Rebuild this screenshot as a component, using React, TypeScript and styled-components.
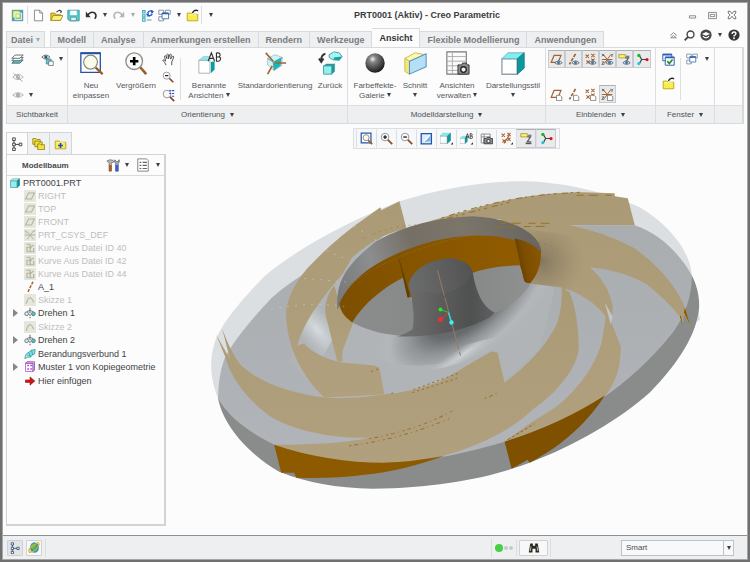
import React from "react";
import styled, { createGlobalStyle, css } from "styled-components";

const GlobalStyle = createGlobalStyle`
  * { box-sizing: border-box; }
  html, body { margin: 0; padding: 0; }
  body { font-family: "Liberation Sans", Arial, sans-serif; font-size: 8px; color: #4a4d50; }
  button { font: inherit; color: inherit; padding: 0; margin: 0; border: 0; background: none; }
  ul { list-style: none; margin: 0; padding: 0; }
`;

/* ---------- icons ---------- */

const BROWN = "#a8622e";

const Plane = ({ c = BROWN }: { c?: string }) => (
  <path d="M5 3h8.500l-3.500 8.500H1.500z" fill="none" stroke={c} strokeWidth="1.500" />
);
const Axis = () => (
  <path d="M10.500 1L3 14" stroke={BROWN} strokeWidth="2" strokeDasharray="4.500 1.500" fill="none" />
);
const Crosses = () => (
  <path
    d="M2 2l4 4M6 2L2 6M9 1l4 4M13 1L9 5M3 9l4 4M7 9l-4 4M9 7l4 4M13 7l-4 4"
    stroke={BROWN}
    strokeWidth="1.300"
    fill="none"
  />
);
const Csys = () => (
  <g fill="none">
    <path d="M1 8h13M3 2l9 12M12 2L4 13" stroke={BROWN} strokeWidth="1.200" />
    <path d="M1 1l3 3M4 1L1 4M12 1l1.500 2L15 1M13.500 3v2M1 11h3l-3 3h3" stroke="#55585c" strokeWidth="1" />
  </g>
);
const Eye = () => (
  <g>
    <path d="M6 12q4.500-4.500 9 0q-4.500 4-9 0z" fill="#dfe8ee" stroke="#4d5a66" strokeWidth="1" />
    <circle cx="10.500" cy="12" r="1.800" fill="#3d77a5" />
  </g>
);
const Page = () => (
  <path d="M8 9h4.500l2 2V15.500H8z" fill="#fff" stroke="#777" strokeWidth="1" />
);
const Cube = ({ x = 1, y = 2, s = 1 }: { x?: number; y?: number; s?: number }) => (
  <g transform={`translate(${x} ${y}) scale(${s})`} strokeLinejoin="round">
    <path d="M0 4h9v9H0z" fill="#fff" stroke="#93a3a8" strokeWidth=".8" />
    <path d="M0 4l3.500-3.500H13L9 4z" fill="#7ff0f0" stroke="#7ab" strokeWidth=".5" />
    <path d="M9 4l4-3.500v9L9 13z" fill="#0a9a9a" stroke="#178" strokeWidth=".5" />
  </g>
);
const Folder = () => (
  <g>
    <path d="M1.500 5h5l1 1.500h7v8h-13z" fill="#f7ee4a" stroke="#b99a16" strokeWidth="1" />
    <path d="M3 7h10" stroke="#fffbb0" />
  </g>
);
const Lens = ({ sign }: { sign?: "+" | "-" }) => (
  <g>
    <path d="M9.500 9.500L15 15" stroke="#8a4a22" strokeWidth="2.200" />
    <circle cx="6.200" cy="6.200" r="4.700" fill="#fafafa" stroke="#8a8d90" strokeWidth="1.100" />
    {sign && <path d="M4 6.200h4.500" stroke="#111" strokeWidth="1.500" />}
    {sign === "+" && <path d="M6.200 4v4.500" stroke="#111" strokeWidth="1.500" />}
  </g>
);
const Windows = () => (
  <g fill="#fff" stroke="#6f7f92" strokeWidth="1">
    <path d="M1 1.500h6v5H1zM9 1.500h6v5H9zM1 9.500h6v5H1z" />
    <path d="M5 5h8v7H5z" stroke="#2a62b0" />
    <path d="M5 5.500h8" stroke="#2a62b0" strokeWidth="2" />
  </g>
);
const Camera = () => (
  <g>
    <path d="M5 8h3l1-1.500h3L13 8h2.500v6.500H5z" fill="#8b8f92" stroke="#333" strokeWidth="1" />
    <circle cx="10.500" cy="11.200" r="2.100" fill="#eee" stroke="#222" strokeWidth="1" />
  </g>
);
const Tag = () => (
  <g>
    <path d="M1 2h8v4H1z" fill="#fbf46a" stroke="#a3982a" strokeWidth="1" />
    <path d="M9 6h4l-4 6h5M10 4h4" stroke="#555" strokeWidth="1.400" fill="none" />
  </g>
);
const Triad = () => (
  <g>
    <path d="M4 3l3 5h6M7 8l-3 5" stroke="#444" strokeWidth="1.500" fill="none" />
    <circle cx="3.500" cy="3" r="2" fill="#18b818" />
    <circle cx="13.500" cy="8" r="2" fill="#e01010" />
    <circle cx="3.500" cy="13" r="2" fill="#20c8d8" />
  </g>
);
const Nodes = ({ c = "#333" }: { c?: string }) => (
  <g fill="#fff" stroke={c} strokeWidth="1">
    <path d="M4.500 4v9M4.500 8.500H11" fill="none" />
    <path d="M3 1h3v3H3zM3 7h3v3H3zM3 12.500h3v3H3zM10.500 7h3v3h-3z" />
  </g>
);
const Muted = ({ children }: { children: React.ReactNode }) => (
  <g>
    <path d="M0 0h16v16H0z" fill="#e6e6dc" />
    {children}
  </g>
);

const icons: Record<string, React.ReactNode> = {
  app: (
    <g>
      <path d="M1 1h14v14H1z" fill="#4f9fc9" />
      <path d="M2 2h9v9H2z" fill="#d9ec93" stroke="#6da544" />
      <path d="M5 5h8v8H5z" fill="#8ecb70" stroke="#fff" />
      <path d="M6.500 6.500h4v4h-4z" fill="#f4f9b8" />
    </g>
  ),
  page: <path d="M3 1.500h6.500L13 5v9.500H3zM9.500 1.500V5H13" fill="#fff" stroke="#777" />,
  open: (
    <g stroke="#a98312">
      <path d="M1 14V5h5l1 2h6v7z" fill="#e8c93c" />
      <path d="M1 14l3-6h12l-3 6z" fill="#fbf07a" />
      <path d="M8 4q3-4 6-1l-1 2" fill="none" stroke="#333" strokeWidth="1.300" />
    </g>
  ),
  save: (
    <g>
      <path d="M1 1.500h14v13H3l-2-2z" fill="#4fd0cf" stroke="#3a8f95" />
      <path d="M4 2h8v5.500H4z" fill="#fff" />
      <path d="M4.500 10h7v4.500h-7z" fill="#e8f2f3" stroke="#3a8f95" />
    </g>
  ),
  undo: (
    <g>
      <path d="M3 8q4-6 9-3q3 3 0 7" fill="none" stroke="#333" strokeWidth="2" />
      <path d="M1 3v7h6z" fill="#333" />
    </g>
  ),
  redo: (
    <g>
      <path d="M13 8q-4-6-9-3q-3 3 0 7" fill="none" stroke="#b4b6b8" strokeWidth="2" />
      <path d="M15 3v7H9z" fill="#b4b6b8" />
    </g>
  ),
  regen: (
    <g fill="none">
      <path d="M2 2h3v3H2zM2 7h3v3H2zM2 12h3v3H2zM7 8.500h4M7 13.500h6" stroke="#39a9b9" strokeWidth="1.300" />
      <path d="M8 5q2-4 6-2M14 6q-3 4-6 1" stroke="#2457c5" strokeWidth="1.600" />
      <path d="M12 1l4 2-3 3zM9 9L6 6l4-1z" fill="#2457c5" />
    </g>
  ),
  windows: <Windows />,
  closeFolder: (
    <g>
      <Folder />
      <path d="M8 5q1-3 5-3.500l2 1" stroke="#222" strokeWidth="1.500" fill="none" />
    </g>
  ),
  layers: (
    <g fill="#fff" stroke="#4b5556">
      <path d="M1 12.500l4-4h10l-4 4z" fill="#4fd0cf" />
      <path d="M1 9.500l4-4h10l-4 4z" />
      <path d="M1 6.500l4-4h10l-4 4z" />
    </g>
  ),
  eyePages: (
    <g>
      <path d="M1 5q5-5 10 0q-5 5-10 0z" fill="#f3f6f7" stroke="#555" />
      <circle cx="6" cy="5" r="2" fill="#356" />
      <path d="M6.500 7.500h6v6h-6z" fill="#59c9d3" stroke="#4a8890" />
      <path d="M9.500 10h5.500v5.500H9.500z" fill="#fff" stroke="#667" />
    </g>
  ),
  eyeOff: (
    <g stroke="#a0a2a4" fill="none">
      <path d="M1 8q7-7 14 0q-7 7-14 0z" />
      <circle cx="8" cy="8" r="2.300" fill="#c5c7c9" />
      <path d="M2 3l12 11" strokeWidth="1.300" />
    </g>
  ),
  eyeOn: (
    <g stroke="#a0a2a4" fill="none">
      <path d="M1 8q7-6 14 0q-7 6-14 0z" />
      <circle cx="8" cy="8" r="2.500" fill="#aeb1b3" />
    </g>
  ),
  hand: (
    <path
      d="M5 15q-1-3-4-6q1-2 3.500 1L3 4q1-1.500 2 0l1 3V2q1-1.500 2 0v5l1.500-5q1-1 2 0L10.500 7.500 13 4q1.500-.5 1.500 1L12 11v4"
      fill="#fff"
      stroke="#444"
      strokeWidth="1.100"
    />
  ),
  zoomOut: <Lens sign="-" />,
  zoomIn: <Lens sign="+" />,
  zoomSel: (
    <g>
      <Lens />
      <path d="M9 2h2M12 2h3M9 5.500h2M12 5.500h3M12 9h3" stroke="#2d50d0" strokeWidth="1.300" />
    </g>
  ),
  refit: (
    <g>
      <path d="M1.500 1.500h12v12h-12z" fill="#fff" stroke="#2456a8" strokeWidth="1.500" />
      <path d="M10 10l5 5" stroke="#9a5a2a" strokeWidth="2" />
      <circle cx="7.500" cy="7" r="3.700" fill="#fbfbe8" stroke="#777" />
    </g>
  ),
  bigRefit: (
    <g>
      <path d="M2 2h21v21H2z" fill="#fff" stroke="#2550a4" strokeWidth="1.400" />
      <path d="M2 2.500h21" stroke="#2550a4" strokeWidth="2" />
      <path d="M18 18l7.500 7" stroke="#9a5d22" strokeWidth="2.500" />
      <circle cx="12.500" cy="12" r="7.500" fill="#fbfbec" stroke="#8a8a85" strokeWidth="1.300" />
    </g>
  ),
  bigZoom: (
    <g>
      <path d="M17 17l7 8" stroke="#9a5d22" strokeWidth="2.800" />
      <circle cx="11" cy="11" r="9" fill="#fafaf6" stroke="#8a8d8f" strokeWidth="1.400" />
      <path d="M11 6.500v9M6.500 11h9" stroke="#000" strokeWidth="2.800" />
    </g>
  ),
  bigNamed: (
    <g>
      <path d="M2 10h12v14H2z" fill="#fff" stroke="#a7b0b3" />
      <path d="M2 10l5-4h7v4z" fill="#8eeaea" stroke="#7ab" strokeWidth=".5" />
      <path d="M15 12l4-1v9l-4 4z" fill="#0a9d9d" />
      <path d="M12 11l3.500-9L19 11M13.300 8h4.500M21 2v9h2.500q2-.5 2-2.500T23 6.500h-2M21 2h2q2 .2 2 2.200T23 6.500" fill="none" stroke="#333" strokeWidth="1.200" />
    </g>
  ),
  bigOrient: (
    <g>
      <path d="M5 8l8-4 8 3-1 9-8 5-7-6z" fill="#c6f7f6" stroke="#538" strokeOpacity=".3" />
      <path d="M11 12l9-5-1 9-7 5z" fill="#19b6b6" />
      <path d="M5 8l6 4 10-5M11 12l1 9" stroke="#68979b" fill="none" />
      <path d="M3 2l8 9M13 13h12M10 16L5 25" stroke="#a06632" strokeWidth="1.800" />
    </g>
  ),
  bigBack: (
    <g>
      <path d="M8 3Q3 4 3.500 11M1 8l2.500 4L6 8" fill="none" stroke="#333" strokeWidth="2" />
      <path d="M12 4l5-3 6 1 3 4-3 4-7-.5L12 7z" fill="#a7f5f3" stroke="#4a9a9d" />
      <path d="M17 7l9-1-3 4-6-.5z" fill="#13a2a2" />
      <path d="M6 16h9v9H6z" fill="#8ff2f0" stroke="#4a9a9d" />
      <path d="M6 16l3-2h9l-3 2zM15 16l3-2v8l-3 3z" fill="#1b9797" stroke="#4a9a9d" strokeWidth=".5" />
    </g>
  ),
  bigSphere: (
    <g>
      <defs>
        <radialGradient id="sphere" cx=".38" cy=".3" r=".7">
          <stop offset="0" stopColor="#f2f2f2" />
          <stop offset=".25" stopColor="#858585" />
          <stop offset=".65" stopColor="#4d4d4d" />
          <stop offset="1" stopColor="#1c1c1c" />
        </radialGradient>
      </defs>
      <circle cx="13" cy="13" r="10.500" fill="url(#sphere)" />
    </g>
  ),
  bigSection: (
    <g strokeLinejoin="round">
      <path d="M2 8L13 2l11 2-16 8z" fill="#fdf9ae" stroke="#c9b94c" />
      <path d="M2 8l5 3v14l-5-3z" fill="#f3e778" stroke="#c9b94c" />
      <path d="M7 11l18-8v14L7 25z" fill="#b4e0f5" stroke="#5c8fc0" strokeWidth="1.100" />
    </g>
  ),
  bigManage: (
    <g>
      <path d="M2 1h21v24H2z" fill="#fafafa" stroke="#777" strokeWidth="1.200" />
      <path d="M2 6h21M2 11h21M2 16h21M2 21h21M8 1v24" stroke="#a9abad" />
      <path d="M14 15h4l1-2h4l1 2h2v10H14z" fill="#8a8d8f" stroke="#333" />
      <circle cx="20" cy="20" r="3" fill="#efefef" stroke="#222" strokeWidth="1.400" />
    </g>
  ),
  bigStyle: <Cube x={1} y={1} s={1.85} />,
  planeEye: <g><Plane /><Eye /></g>,
  axisEye: <g><Axis /><Eye /></g>,
  pointEye: <g><Crosses /><Eye /></g>,
  csysEye: <g><Csys /><Eye /></g>,
  tagEye: <g><Tag /><Eye /></g>,
  tag: <g><Tag /><path d="M7 14h7" stroke="#555" strokeWidth="2" /></g>,
  triad: <Triad />,
  planeTag: <g><Plane /><Page /></g>,
  axisTag: <g><Axis /><Page /></g>,
  pointTag: <g><Crosses /><Page /></g>,
  csysTag: <g><Csys /><Page /></g>,
  activate: (
    <g fill="#fff" stroke="#2a62b0" strokeWidth="1.200">
      <path d="M1 1.500h11v8H1z" />
      <path d="M4 5h11v10H4z" />
      <path d="M1 2h11M4 5.500h11" strokeWidth="2" />
      <path d="M6.500 10l2.500 3 4-5" stroke="#188a30" strokeWidth="2" fill="none" />
    </g>
  ),
  repaint: (
    <g>
      <path d="M1.500 2h12.500v12.500h-12.500z" fill="#dcecfa" stroke="#2456a8" strokeWidth="1.600" />
      <path d="M4 13L13 3v8z" fill="#7ab0e4" />
      <path d="M5 12l7-8" stroke="#fff" strokeWidth="1.500" />
    </g>
  ),
  cube: <g><Cube x={0} y={1} /><path d="M13 15.500h3v-3z" fill="#333" /></g>,
  named: (
    <g>
      <Cube x={0} y={5} s={0.7} />
      <path d="M7 8l2.200-6 2 6M7.800 6H11M12.500 2v6h1.500q1.500-.3 1.500-1.600T14 5h-1.500M12.500 2H14q1 .2 1 1.500T14 5" fill="none" stroke="#333" />
      <path d="M13 15.500h3v-3z" fill="#333" />
    </g>
  ),
  manage: <g><path d="M1.500 2.500h11v11h-11zM1.500 6h11M5 2.500v11" fill="#fff" stroke="#777" /><Camera /></g>,
  datum: <g><Crosses /><path d="M5 14L12 3" stroke={BROWN} strokeWidth="1.300" /><path d="M13 15.500h3v-3z" fill="#333" /></g>,
  nodes: <Nodes />,
  nodesBlue: <Nodes c="#24396b" />,
  folders: (
    <g fill="#f2e23c" stroke="#8d7a1a">
      <path d="M1 2h4l1 1h4v6H1z" /><path d="M3.500 5h4l1 1h4v6h-9z" /><path d="M7 8.500h3l1 1h4.500v6H7z" />
    </g>
  ),
  favorites: (
    <g>
      <Folder />
      <path d="M8 7.500v6M5 10.500h6" stroke="#2547c9" strokeWidth="2" />
    </g>
  ),
  tools: (
    <g>
      <path d="M1 3.500q3-2.500 7-1l1 2-3 1v9.500H3.500V5.500z" fill="#b8b8b8" stroke="#666" strokeWidth=".8" />
      <path d="M3.500 8h3v7h-3z" fill="#b0561e" />
      <path d="M10 2q-1 3 1 4v9h3V6q2-1 1-4l-1 2h-2z" fill="#aab" stroke="#556" strokeWidth=".8" />
      <path d="M11 8h3v7h-3z" fill="#2f62c6" />
    </g>
  ),
  list: (
    <g>
      <path d="M2 1h10l2 2v12H2z" fill="#fff" stroke="#777" />
      <path d="M4 5h2M4 8.500h2M4 12h2M7.500 5h5M7.500 8.500h5M7.500 12h5" stroke="#666" strokeWidth="1.300" />
    </g>
  ),
  part: (
    <g>
      <path d="M2 5h9v9H2z" fill="#8feeee" stroke="#4fa3a6" />
      <path d="M2 5l2.500-2.500H14L11 5z" fill="#bff" stroke="#4fa3a6" />
      <path d="M11 5l3-2.500V11l-3 3z" fill="#138a8d" stroke="#2d8f93" />
    </g>
  ),
  mPlane: <Muted><path d="M6 4h8l-4 8H2z" fill="none" stroke="#b3b3a0" strokeWidth="1.400" /></Muted>,
  mCsys: <Muted><path d="M1 8h14M3 2l10 12M13 2L4 14M1 2l3 4M12 4l3-2" fill="none" stroke="#b3b3a0" strokeWidth="1.300" /></Muted>,
  mCurve: <Muted><path d="M3 3h5v4H4v6h5q-2-4 0-6t4-3M9 13h4V8" fill="none" stroke="#b3b3a0" strokeWidth="1.600" /></Muted>,
  mSketch: <Muted><path d="M3 13Q7-2 13 11" fill="none" stroke="#b3b3a0" strokeWidth="1.500" /></Muted>,
  axis: <path d="M12 1L5 15" stroke={BROWN} strokeWidth="2" strokeDasharray="4 1.500" fill="none" />,
  revolve: (
    <g fill="none" stroke="#4d6a6c" strokeWidth="1.100">
      <path d="M8 1v14" strokeDasharray="3 1" stroke="#444" />
      <circle cx="3.500" cy="9" r="2.500" fill="#d6f1f1" />
      <circle cx="12.500" cy="9" r="2.500" fill="#58c6c8" />
      <path d="M4 6q4-3 8 0" />
    </g>
  ),
  surface: (
    <g stroke="#1e8d96" strokeWidth=".9">
      <path d="M1 14q1-7 5-8l3 6q-5 0-8 2z" fill="#a8f4f4" />
      <path d="M6 6q3-4 9-4l-1 6q-4 1-5 4z" fill="#7fe0e4" />
      <path d="M3 9l5 1.500M10 3l1.500 6" fill="none" />
    </g>
  ),
  pattern: (
    <g>
      <path d="M2 3h10v11H2z" fill="#fff" stroke="#a64fd0" />
      <path d="M2 3l2-2h10v11l-2 2V3z" fill="#e3c0f2" stroke="#7a4a9a" />
      <path d="M4.500 6h2M8.500 6h2M4.500 10.500h2M8.500 10.500h2" stroke="#b32cd6" strokeWidth="2" />
    </g>
  ),
  insert: <path d="M2 6.500h6V2.500L14.500 8 8 13.500V10H2z" fill="#d61313" stroke="#7c0d0d" strokeWidth=".7" />,
  browser: (
    <g>
      <ellipse cx="8" cy="8" rx="5.500" ry="6.500" fill="#2f9ab8" />
      <path d="M4 5l4-2 2 3-3 4-3-1z" fill="#63c04a" />
      <path d="M13.500 1.500Q-2 9 2 14q9-1 12-11" fill="none" stroke="#ddb11a" strokeWidth="1.600" />
    </g>
  ),
  binoculars: (
    <g fill="#2a2a22">
      <path d="M3 2h3.500v3H9.500V2H13l2 12h-5V9H6v5H1z" />
      <path d="M4 6L3 12M12 6l1 6" stroke="#c9c9b4" strokeWidth="1.200" />
    </g>
  ),
  min: <path d="M2.500 8.500h11v4h-11z" fill="#fff" stroke="#666" strokeWidth="1.300" />,
  max: <path d="M1 2.500h14v11H1zM4 6h8v4H4z" fill="#fff" stroke="#666" strokeWidth="1.300" />,
  close: (
    <path d="M2 2h3l3 4 3-4h3v3l-3 3 3 3v3h-3l-3-4-3 4H2v-3l3-3-3-3z" fill="#fff" stroke="#555" strokeWidth="1.300" />
  ),
  collapse: <path d="M2 8l6-5 6 5M3 12l5-4 5 4z" fill="none" stroke="#666" strokeWidth="1.300" />,
  search: (
    <g fill="none" stroke="#444">
      <circle cx="9.500" cy="6.500" r="5" strokeWidth="2" />
      <path d="M6 10l-5 5" strokeWidth="2.600" />
    </g>
  ),
  learn: (
    <g>
      <circle cx="8" cy="8" r="7.500" fill="#45484b" />
      <path d="M2.500 6.500L8 4l5.500 2.500L8 9z" fill="#fff" />
      <path d="M4 9.500q4 4.500 8 0" stroke="#fff" strokeWidth="1.500" fill="none" />
    </g>
  ),
  help: (
    <g>
      <circle cx="8" cy="8" r="7.500" fill="#333638" />
      <path d="M5.500 6.500Q5.500 4 8 4t2.500 2.200Q10.500 7.500 8 9v1" stroke="#fff" strokeWidth="1.900" fill="none" />
      <circle cx="8" cy="12.300" r="1.200" fill="#fff" />
    </g>
  ),
};

const IconSvg = styled.svg`
  display: block;
  flex: none;
`;
const Icon = ({ name, size = 13 }: { name: string; size?: number }) => {
  const box = name.startsWith("big") ? 27 : 16;
  return (
    <IconSvg width={size} height={size} viewBox={`0 0 ${box} ${box}`} aria-hidden="true">
      {icons[name]}
    </IconSvg>
  );
};

const Caret = styled.span<{ $dim?: boolean }>`
  display: inline-block;
  flex: none;
  border: 2px solid transparent;
  border-top: 4px solid ${(p) => (p.$dim ? "#a5a7a9" : "#3c3f42")};
  border-bottom: 0;
  vertical-align: 1px;
`;

/* ---------- frame ---------- */

const Frame = styled.div`
  min-height: 100vh;
  display: flex;
  flex-direction: column;
  background: #fcfcfc;
  border: 2px solid #707070;
  box-shadow: inset 0 0 0 1px #a6a6a6;
  padding: 1px;
`;
const TitleBar = styled.header`
  display: grid;
  grid-template-columns: auto 1fr auto;
  align-items: center;
  height: 24px;
  padding: 0 4px;
`;
const Row = styled.div<{ $gap?: number }>`
  display: flex;
  align-items: center;
  gap: ${(p) => p.$gap ?? 0}px;
`;
const Title = styled.h1`
  margin: 0;
  padding-right: 48px;
  font-size: 9px;
  font-weight: bold;
  color: #3b3d40;
  text-align: center;
  white-space: nowrap;
`;
const WindowButtons = styled(Row)`
  justify-content: flex-end;
  padding-right: 1px;
`;
const IconButton = styled.button<{ $w?: number }>`
  width: ${(p) => p.$w ?? 17}px;
  height: 18px;
  flex: none;
  display: flex;
  align-items: center;
  justify-content: center;
`;
const Divider = styled.span<{ $h?: number }>`
  flex: none;
  width: 1px;
  height: ${(p) => p.$h ?? 18}px;
  background: #dcdee0;
`;

/* ---------- ribbon ---------- */

const TabRow = styled.nav`
  display: flex;
  align-items: flex-end;
  padding: 0 3px;
  height: 20px;
`;
const TabStrip = styled.div`
  display: flex;
  align-items: flex-end;
  margin-left: 5px;
`;
const Tab = styled.button<{ $active?: boolean }>`
  height: ${(p) => (p.$active ? 19 : 16)}px;
  padding: 0 7px;
  font-size: 9px;
  font-weight: bold;
  white-space: nowrap;
  color: ${(p) => (p.$active ? "#333538" : "#797c80")};
  background: ${(p) => (p.$active ? "#fcfcfc" : "#eeeff1")};
  border: 1px solid #d8dbde;
  border-bottom: 0;
  & + & { border-left-width: 0; }
`;
const FileTab = styled(Tab)`
  padding: 0 4px;
`;
const TabTools = styled(Row)`
  margin-left: auto;
  height: 24px;
  padding-right: 1px;
`;
const Ribbon = styled.section`
  display: grid;
  grid-template-columns: 60px 280px 198px 110px 59px 1fr;
  margin: 0 3px;
  border: 1px solid #d8dbde;
  border-right-width: 2px;
`;
const Group = styled.div`
  display: grid;
  grid-template-rows: 57px 18px;
  min-width: 0;
  & + & { border-left: 1px solid #dcdee0; }
`;
const GroupBody = styled.div<{ $left?: number }>`
  display: flex;
  align-items: flex-start;
  padding: 2px 0 0 ${(p) => p.$left ?? 0}px;
`;
const GroupLabel = styled.div`
  display: flex;
  align-items: center;
  justify-content: center;
  gap: 5px;
  background: #eeeff1;
  border-top: 1px solid #dcdee0;
  color: #4f5356;
`;
const BigButton = styled.button<{ $w: number }>`
  width: ${(p) => p.$w}px;
  flex: none;
  display: flex;
  flex-direction: column;
  align-items: center;
  gap: 5px;
  padding-top: 1px;
  line-height: 10px;
  color: #55585c;
  white-space: nowrap;
`;
const SmallStack = styled.div<{ $w?: number; $row?: number }>`
  display: grid;
  grid-auto-rows: ${(p) => p.$row ?? 18}px;
  width: ${(p) => p.$w ?? 17}px;
  flex: none;
`;
const GroupDivider = styled(Divider)`
  margin-top: 8px;
`;
const ToggleGrid = styled.div`
  display: flex;
  flex-direction: column;
  gap: 17px;
`;
const Toggle = styled.button<{ $on?: boolean; $w?: number }>`
  width: ${(p) => p.$w ?? 17}px;
  height: 18px;
  flex: none;
  display: flex;
  align-items: center;
  justify-content: center;
  border: 1px solid transparent;
  ${(p) =>
    p.$on &&
    css`
      background: #e9eaec;
      border-color: #aeb1b4 #c8cacd #c8cacd;
    `}
`;

const Big = ({ icon, lines, w, menu }: { icon: string; lines: string[]; w: number; menu?: boolean }) => (
  <BigButton $w={w} type="button">
    <Icon name={icon} size={25} />
    <span>
      {lines.map((line, i) => (
        <React.Fragment key={line}>
          {i > 0 && <br />}
          {line}
        </React.Fragment>
      ))}
      {menu && (lines.length > 1 ? " " : <br />)}
      {menu && <Caret />}
    </span>
  </BigButton>
);

/* ---------- workspace ---------- */

const Workspace = styled.main`
  flex: 1;
  display: flex;
  min-height: 320px;
`;
const Sidebar = styled.aside`
  width: 160px;
  flex: none;
  display: flex;
  flex-direction: column;
  margin: 8px 0 9px 3px;
`;
const SideTabs = styled.div`
  display: flex;
`;
const SideTab = styled.button<{ $active?: boolean }>`
  width: 22px;
  height: 22px;
  display: flex;
  align-items: center;
  justify-content: center;
  border: 1px solid #d3d6d9;
  border-left-width: ${(p) => (p.$active ? 1 : 0)}px;
  border-bottom: 0;
  background: ${(p) => (p.$active ? "#fcfcfc" : "#f0f1f3")};
`;
const Panel = styled.div`
  flex: 1;
  border: 1px solid #d0d4d8;
  border-width: 1px 2px 2px 1px;
`;
const PanelHead = styled.div`
  display: flex;
  align-items: center;
  height: 21px;
  padding: 0 1px 0 15px;
  border-bottom: 1px solid #d8dbde;
`;
const PanelTitle = styled.h2`
  flex: 1;
  margin: 0;
  font-size: 8px;
  color: #46494c;
`;
const Tree = styled.ul`
  font-size: 9px;
  white-space: nowrap;
`;
const TreeItem = styled.li<{ $muted?: boolean; $root?: boolean; $tall?: boolean }>`
  display: flex;
  align-items: center;
  gap: 2px;
  height: ${(p) => (p.$tall ? 14 : 13)}px;
  padding-left: ${(p) => (p.$root ? 2 : 6)}px;
  color: ${(p) => (p.$muted ? "#bcbebf" : "#3f4245")};
`;
const Expander = styled.span<{ $open?: boolean }>`
  width: 9px;
  height: 8px;
  flex: none;
  &::before {
    content: "";
    display: ${(p) => (p.$open ? "block" : "none")};
    width: 0;
    border: 4px solid transparent;
    border-left: 5px solid #85888b;
    border-right: 0;
  }
`;
const Viewport = styled.section`
  flex: 1;
  min-width: 0;
  display: flex;
  flex-direction: column;
  align-items: center;
  padding-top: 4px;
`;
const ViewTools = styled.div`
  display: flex;
  height: 21px;
  flex: none;
  border: 1px solid #dcdee1;
  background: #f7f8f9;
  padding: 0 3px 0 2px;
`;
const ViewTool = styled(Toggle)`
  height: 19px;
  border-left-color: #dcdee1;
`;
const Scene = styled.svg`
  flex: 1 1 0;
  width: 100%;
  height: 0;
  min-height: 0;
  display: block;
`;

/* ---------- status bar ---------- */

const StatusBar = styled.footer`
  display: flex;
  align-items: center;
  height: 24px;
  padding: 0 13px 0 4px;
  background: #eeeff1;
  border-top: 1px solid #8e9092;
`;
const StatusButton = styled.button<{ $w?: number; $on?: boolean }>`
  width: ${(p) => p.$w ?? 16}px;
  height: 16px;
  display: flex;
  align-items: center;
  justify-content: center;
  border: 1px solid #cfd1d4;
  background: ${(p) => (p.$on ? "#e3e4e6" : "#f8f8f9")};
  border-radius: 1px;
`;
const Spacer = styled.span`
  flex: 1;
`;
const Dots = styled.span`
  display: flex;
  align-items: center;
  gap: 1px;
  padding: 0 1px;
`;
const Dot = styled.span<{ $on?: boolean }>`
  width: ${(p) => (p.$on ? 8 : 4)}px;
  height: ${(p) => (p.$on ? 8 : 4)}px;
  border-radius: 50%;
  background: ${(p) => (p.$on ? "#45d045" : "#c6c8ca")};
`;
const SelectBox = styled.div`
  display: grid;
  grid-template-columns: 1fr 11px;
  margin-left: 70px;
  width: 113px;
`;
const Select = styled.select`
  grid-area: 1 / 1 / 2 / 3;
  appearance: none;
  height: 16px;
  padding: 0 4px;
  border: 1px solid #bfc2c5;
  border-radius: 0;
  background: #f8f9fa;
  font: 8px "Liberation Sans", Arial, sans-serif;
  color: #4a4d50;
`;
const SelectArrow = styled.span`
  grid-area: 1 / 2;
  display: flex;
  align-items: center;
  justify-content: center;
  border-left: 1px solid #bfc2c5;
  pointer-events: none;
`;

/* ---------- data ---------- */

const tabsBefore = ["Modell", "Analyse", "Anmerkungen erstellen", "Rendern", "Werkzeuge"];
const tabsAfter = ["Flexible Modellierung", "Anwendungen"];

type Item = { icon: string; label: string; muted?: boolean; open?: boolean };
const tree: Item[] = [
  { icon: "mPlane", label: "RIGHT", muted: true },
  { icon: "mPlane", label: "TOP", muted: true },
  { icon: "mPlane", label: "FRONT", muted: true },
  { icon: "mCsys", label: "PRT_CSYS_DEF", muted: true },
  { icon: "mCurve", label: "Kurve Aus Datei ID 40", muted: true },
  { icon: "mCurve", label: "Kurve Aus Datei ID 42", muted: true },
  { icon: "mCurve", label: "Kurve Aus Datei ID 44", muted: true },
  { icon: "axis", label: "A_1" },
  { icon: "mSketch", label: "Skizze 1", muted: true },
  { icon: "revolve", label: "Drehen 1", open: true },
  { icon: "mSketch", label: "Skizze 2", muted: true },
  { icon: "revolve", label: "Drehen 2", open: true },
  { icon: "surface", label: "Berandungsverbund 1" },
  { icon: "pattern", label: "Muster 1 von Kopiegeometrie", open: true },
  { icon: "insert", label: "Hier einfügen" },
];

const viewTools: [string, string, boolean?][] = [
  ["refit", "Neu einpassen"],
  ["zoomIn", "Vergrößern"],
  ["zoomOut", "Verkleinern"],
  ["repaint", "Bildaufbau"],
  ["cube", "Darstellungsstil"],
  ["named", "Benannte Ansichten"],
  ["manage", "Ansichten verwalten"],
  ["datum", "Bezugsanzeige"],
  ["tag", "Anmerkungsanzeige", true],
  ["triad", "Drehzentrum", true],
];

/* ---------- impeller ---------- */

const Impeller = () => (
  <Scene viewBox="167 150 580 385" role="img" aria-label="PRT0001">
    <defs>
      <linearGradient id="tan" x1="0" y1="0" x2="0" y2="1">
        <stop offset="0" stopColor="#ab9a76" />
        <stop offset="1" stopColor="#b1a07d" />
      </linearGradient>
      <linearGradient id="disc" x1="0" y1="0" x2="0" y2="1">
        <stop offset="0" stopColor="#a9adb0" />
        <stop offset="1" stopColor="#b1b4b8" />
      </linearGradient>
      <linearGradient id="ring" gradientUnits="userSpaceOnUse" x1="338" y1="300" x2="545" y2="235">
        <stop offset="0" stopColor="#77797a" />
        <stop offset=".2" stopColor="#8b8d8f" />
        <stop offset=".4" stopColor="#766f66" />
        <stop offset=".65" stopColor="#7b756c" />
        <stop offset="1" stopColor="#66645f" />
      </linearGradient>
      <linearGradient id="hub" gradientUnits="userSpaceOnUse" x1="410" y1="0" x2="492" y2="0">
        <stop offset="0" stopColor="#6c6c6c" />
        <stop offset=".35" stopColor="#5d5d5d" />
        <stop offset=".75" stopColor="#4f5050" />
        <stop offset="1" stopColor="#5d5e5f" />
      </linearGradient>
      <linearGradient id="hubTop" gradientUnits="userSpaceOnUse" x1="412" y1="280" x2="470" y2="265">
        <stop offset="0" stopColor="#6a6b6b" />
        <stop offset="1" stopColor="#535353" />
      </linearGradient>
      <linearGradient id="floor" gradientUnits="userSpaceOnUse" x1="355" y1="0" x2="530" y2="0">
        <stop offset="0" stopColor="#8b8d8c" />
        <stop offset=".6" stopColor="#858786" />
        <stop offset="1" stopColor="#8f9090" />
      </linearGradient>
      <radialGradient id="cone" gradientUnits="userSpaceOnUse" cx="0" cy="0" r="1" gradientTransform="translate(468 304) rotate(-20) scale(112 52)">
        <stop offset="0" stopColor="#5d5f60" />
        <stop offset=".42" stopColor="#686b6d" />
        <stop offset=".62" stopColor="#909497" />
        <stop offset=".85" stopColor="#b3b7ba" />
        <stop offset="1" stopColor="#b6babd" stopOpacity="0" />
      </radialGradient>
      <radialGradient id="shine" gradientUnits="userSpaceOnUse" cx="0" cy="0" r="1" gradientTransform="translate(465 354) rotate(-17) scale(56 8)">
        <stop offset="0" stopColor="#cfd4d7" />
        <stop offset="1" stopColor="#c0c5c8" stopOpacity="0" />
      </radialGradient>
      <radialGradient id="glow" gradientUnits="userSpaceOnUse" cx="0" cy="0" r="1" gradientTransform="translate(318 330) rotate(-65) scale(48 18)">
        <stop offset="0" stopColor="#d6dbdf" />
        <stop offset="1" stopColor="#c6cbcf" stopOpacity="0" />
      </radialGradient>
      <radialGradient id="shade" gradientUnits="userSpaceOnUse" cx="542" cy="262" r="42">
        <stop offset="0" stopColor="#6f6554" stopOpacity=".65" />
        <stop offset="1" stopColor="#8b7c60" stopOpacity="0" />
      </radialGradient>
      <linearGradient id="amber" gradientUnits="userSpaceOnUse" x1="341" y1="0" x2="541" y2="0">
        <stop offset="0" stopColor="#7d4f00" />
        <stop offset=".45" stopColor="#885600" />
        <stop offset="1" stopColor="#925c00" />
      </linearGradient>
      <linearGradient id="amberEdge" gradientUnits="userSpaceOnUse" x1="517" y1="262" x2="542" y2="257">
        <stop offset="0" stopColor="#633e00" />
        <stop offset=".35" stopColor="#7d4e00" />
        <stop offset="1" stopColor="#8a5600" />
      </linearGradient>
    </defs>

    {/* rim and shroud */}
    <path
      d="M219 399C213 383 209 366 215 345C220 327 240 303 265 277C300 248 345 224 400 202C440 190 480 182 525 182C570 183 610 195 640 208C668 225 690 250 692 276L700 320L600 400L400 470Z"
      fill="#dcdfe2"
    />
    <path
      d="M692 276C698 288 700 300 699 310C696 335 680 362 650 393C620 420 575 446 530 463C490 478 440 488 373 489Q320 488 280 472C255 458 225 430 219 399L300 370L600 300Z"
      fill="#8a8c8b"
    />
    <path
      d="M219 399C219 385 221 372 225 360C232 345 250 322 273 298Q290 283 320 265L400 235L570 226H635C660 235 678 252 692 276C692 295 686 315 673 333C650 362 625 383 605 397C575 415 545 429 505 442C450 458 415 463 383 463C340 462 310 457 275 445C250 433 230 418 219 399Z"
      fill="url(#disc)"
    />
    <path d="M290 360L330 275L365 240L480 230L555 290L540 350L500 385L400 395L310 385Z" fill="#b0b4b7" />
    <ellipse cx="468" cy="304" rx="112" ry="52" transform="rotate(-20 468 304)" fill="url(#cone)" />
    <ellipse cx="465" cy="354" rx="56" ry="8" transform="rotate(-17 465 354)" fill="url(#shine)" />
    <ellipse cx="318" cy="330" rx="48" ry="18" transform="rotate(-65 318 330)" fill="url(#glow)" />

    {/* blades */}
    <g fill="url(#tan)">
      <path d="M400 202L382 211L381 208L363 221C345 233 322 254 307 270C294 286 286 303 287 317C288 342 298 372 325 398L385 395L380 368L375 366L343 363C330 361 312 353 305 344L298 346L301 337C308 318 325 295 343 275L353 258C370 243 385 235 407 229Z" />
      <path d="M335 286C326 297 324 310 328 322L338 362H343V352L354 323L340 303Z" />
      <path d="M217 335L226 357C232 380 250 402 273 418C295 430 330 439 370 438Q340 445 275 445C310 459 350 463 383 463Q415 463 440 457C480 447 515 428 533 410C560 391 580 365 579 345Q578 312 570 293L562 287C563 305 559 325 553 332C543 350 525 368 505 383L498 353L492 352C470 364 450 377 440 382Q415 392 385 395Q355 400 325 398C290 393 263 384 243 367C235 358 229 345 223 329L231 360Z" />
      <path d="M430 222Q450 216 473 210C510 198 550 193 583 193L615 194V197L628 199L635 226H570Q605 233 633 248C660 266 678 290 685 308L690 325L684 315L683 325L680 317Q667 301 647 285C630 275 610 270 590 268Q608 283 613 307L612 324L621 347C621 368 616 383 605 397Q560 425 505 442Q530 423 557 407C580 388 599 362 603 337L606 317C595 302 577 292 562 288L530 284L542 253L500 220Z" />
    </g>
    <path d="M520 229L600 240L606 315Q590 298 562 288L530 284Z" fill="url(#shade)" />
    <path d="M605 303l8 14-2 8z" fill="#c1c5ca" />
    <path d="M685 308l5 17-6-12zM680 317l3 9-2-10z" fill="#8e5a00" />

    {/* bowl */}
    <path d="M338 310C336 280 349 264 377 242C400 229 430 219 473 217C505 218 540 231 542 253L530 248L483 237L407 254L355 286Z" fill="url(#ring)" />
    <path d="M340 304C355 272 390 254 433 242C470 233 510 233 541 252C542 265 537 277 530 284L520 267L473 273L411 298L408 298L404 279L377 297L353 323C346 318 341 312 340 304Z" fill="url(#amber)" />
    <path d="M515 239Q532 243 541 252C542 265 537 277 530 284Q524 284 524 280Z" fill="url(#amberEdge)" />
    <path d="M404 278C384 288 364 304 353 323C370 332 390 337 414 336L418 318L411 298H408Z" fill="url(#floor)" />
    <path d="M472 274Q490 267 520 266L524 280Q525 284 531 284C524 295 512 307 494 314L480 302Z" fill="url(#floor)" />
    <path d="M398 253L410 294V298H408Z" fill="#613e00" />
    <path d="M409 285C413 302 416 318 413 330Q405 335 398 337C435 338 465 331 490 318L495 313C482 307 476 290 473 272Z" fill="url(#hub)" />
    <path d="M409 285C414 267 435 259 452 259Q470 262 473 272C468 284 455 294 438 294Q417 293 409 285Z" fill="url(#hubTop)" />

    {/* blade ends on the lower rim */}
    <path d="M275 445C310 457 350 463 383 463Q415 462 445 456C420 465 390 473 365 475Q335 479 297 478L295 473H282Z" fill="#8e5a00" />
    <path d="M505 442Q560 425 605 396C590 420 565 445 530 463L528 460L512 469Z" fill="#7f5000" />

    {/* broken edge lines */}
    <g fill="none" stroke="#98702c" strokeWidth="1">
      <path d="M442 219Q510 195 583 193M440 221Q475 212 510 203" strokeDasharray="3 5 6 3 2 4" />
      <path d="M495 228L547 227M500 224H550M577 196H612" strokeDasharray="7 5 9 8" />
      <path d="M363 239Q420 214 480 232Q530 238 560 250" strokeDasharray="2 4" opacity=".4" />
      <path d="M345 290Q390 252 480 234" strokeDasharray="1 2" />
      <path d="M350 446Q400 440 450 419M370 439Q420 430 455 410M485 399L497 394" strokeDasharray="2 3 4 3 1 4" />
      <path d="M414 390L458 374M413 393L460 378M392 394L396 393M372 372L380 369" strokeDasharray="2 3" />
      <path d="M508 440L535 424" strokeDasharray="3 2" />
    </g>
    <path d="M265 277Q300 278 350 283M272 310Q310 302 345 307M355 227L378 242M320 248L350 261M240 310L225 330" stroke="#d9dbd9" strokeWidth="1" strokeDasharray="2 6" opacity=".4" fill="none" />

    {/* axis and spin centre */}
    <path d="M438 271L461 356" stroke="#957a6c" strokeWidth="1" strokeDasharray="26 2" />
    <path d="M441 310L449 313" stroke="#25c925" />
    <path d="M441 320L449 313" stroke="#d33" />
    <path d="M449 313L452 323" stroke="#2ed8e0" strokeWidth="1.500" />
    <circle cx="441" cy="310" r="2" fill="#2fe02f" />
    <circle cx="441" cy="320" r="2.500" fill="#f03030" />
    <circle cx="452" cy="323" r="2.200" fill="#3ff0f0" />
  </Scene>
);

/* ---------- page ---------- */

export default function App() {
  return (
    <>
      <GlobalStyle />
      <Frame>
        <TitleBar>
          <Row>
            <IconButton $w={20} aria-label="Creo"><Icon name="app" /></IconButton>
            <Divider />
            <IconButton $w={21} aria-label="Neu"><Icon name="page" /></IconButton>
            <IconButton $w={15} aria-label="Öffnen"><Icon name="open" /></IconButton>
            <IconButton $w={18} aria-label="Speichern"><Icon name="save" /></IconButton>
            <IconButton $w={18} aria-label="Rückgängig"><Icon name="undo" /></IconButton>
            <IconButton $w={10} aria-label="Rückgängig-Liste"><Caret /></IconButton>
            <IconButton $w={17} aria-label="Wiederholen"><Icon name="redo" /></IconButton>
            <IconButton $w={12} aria-label="Wiederholen-Liste"><Caret $dim /></IconButton>
            <IconButton $w={16} aria-label="Regenerieren"><Icon name="regen" /></IconButton>
            <IconButton $w={18} aria-label="Fenster"><Icon name="windows" /></IconButton>
            <IconButton $w={11} aria-label="Fensterliste"><Caret /></IconButton>
            <IconButton $w={17} aria-label="Schließen"><Icon name="closeFolder" /></IconButton>
            <Divider />
            <IconButton $w={18} aria-label="Anpassen"><Caret /></IconButton>
          </Row>
          <Title>PRT0001 (Aktiv) - Creo Parametric</Title>
          <WindowButtons>
            <IconButton $w={20} aria-label="Minimieren"><Icon name="min" size={9} /></IconButton>
            <IconButton $w={20} aria-label="Maximieren"><Icon name="max" size={9} /></IconButton>
            <IconButton $w={20} aria-label="Fenster schließen"><Icon name="close" size={10} /></IconButton>
          </WindowButtons>
        </TitleBar>

        <TabRow>
          <FileTab>Datei <Caret $dim /></FileTab>
          <TabStrip>
            {tabsBefore.map((t) => <Tab key={t}>{t}</Tab>)}
            <Tab $active>Ansicht</Tab>
            {tabsAfter.map((t) => <Tab key={t}>{t}</Tab>)}
          </TabStrip>
          <TabTools>
            <IconButton $w={15} aria-label="Minimieren"><Icon name="collapse" size={9} /></IconButton>
            <IconButton $w={16} aria-label="Suchen"><Icon name="search" size={11} /></IconButton>
            <IconButton $w={18} aria-label="Lernen"><Icon name="learn" size={12} /></IconButton>
            <IconButton $w={10} aria-label="Lernen-Liste"><Caret /></IconButton>
            <IconButton $w={18} aria-label="Hilfe"><Icon name="help" size={12} /></IconButton>
          </TabTools>
        </TabRow>

        <Ribbon>
          <Group>
            <GroupBody $left={2}>
              <SmallStack $w={28}>
                <IconButton aria-label="Ebenen"><Icon name="layers" /></IconButton>
                <IconButton aria-label="Ausblenden"><Icon name="eyeOff" size={12} /></IconButton>
                <Row>
                  <IconButton aria-label="Einblenden"><Icon name="eyeOn" size={12} /></IconButton>
                  <IconButton $w={10} aria-label="Einblenden-Liste"><Caret /></IconButton>
                </Row>
              </SmallStack>
              <IconButton $w={20} aria-label="Status"><Icon name="eyePages" /></IconButton>
              <IconButton $w={8} aria-label="Status-Liste"><Caret /></IconButton>
            </GroupBody>
            <GroupLabel>Sichtbarkeit</GroupLabel>
          </Group>
          <Group>
            <GroupBody>
              <Big icon="bigRefit" lines={["Neu", "einpassen"]} w={46} />
              <Big icon="bigZoom" lines={["Vergrößern"]} w={44} />
              <SmallStack $w={22}>
                <IconButton $w={20} aria-label="Verschieben"><Icon name="hand" /></IconButton>
                <IconButton $w={20} aria-label="Verkleinern"><Icon name="zoomOut" size={12} /></IconButton>
                <IconButton $w={20} aria-label="Auf Auswahl zoomen"><Icon name="zoomSel" /></IconButton>
              </SmallStack>
              <GroupDivider $h={42} />
              <Big icon="bigNamed" lines={["Benannte", "Ansichten"]} w={56} menu />
              <Big icon="bigOrient" lines={["Standardorientierung"]} w={76} />
              <Big icon="bigBack" lines={["Zurück"]} w={34} />
            </GroupBody>
            <GroupLabel>Orientierung <Caret /></GroupLabel>
          </Group>
          <Group>
            <GroupBody $left={3}>
              <Big icon="bigSphere" lines={["Farbeffekte-", "Galerie"]} w={48} menu />
              <Big icon="bigSection" lines={["Schnitt"]} w={32} menu />
              <Big icon="bigManage" lines={["Ansichten", "verwalten"]} w={52} menu />
              <Big icon="bigStyle" lines={["Darstellungsstil"]} w={60} menu />
            </GroupBody>
            <GroupLabel>Modelldarstellung <Caret /></GroupLabel>
          </Group>
          <Group>
            <GroupBody $left={2}>
              <ToggleGrid>
                <Row>
                  {[["planeEye", "Ebenen"], ["axisEye", "Achsen"], ["pointEye", "Punkte"], ["csysEye", "Koordinatensysteme"], ["tagEye", "Anmerkungen"], ["triad", "Drehzentrum"]].map(([n, l]) => (
                    <Toggle key={n} $on $w={n === "triad" ? 18 : 17} aria-pressed="true" aria-label={l}><Icon name={n} /></Toggle>
                  ))}
                </Row>
                <Row>
                  {[["planeTag", "Ebenen-Tags"], ["axisTag", "Achsen-Tags"], ["pointTag", "Punkt-Tags"], ["csysTag", "Koordinatensystem-Tags"]].map(([n, l]) => (
                    <Toggle key={n} $on={n === "csysTag"} aria-pressed={n === "csysTag"} aria-label={l}><Icon name={n} /></Toggle>
                  ))}
                </Row>
              </ToggleGrid>
            </GroupBody>
            <GroupLabel>Einblenden <Caret /></GroupLabel>
          </Group>
          <Group>
            <GroupBody $left={2}>
              <SmallStack $w={22} $row={24}>
                <IconButton $w={20} aria-label="Aktivieren"><Icon name="activate" /></IconButton>
                <IconButton $w={20} aria-label="Schließen"><Icon name="closeFolder" /></IconButton>
              </SmallStack>
              <GroupDivider $h={42} />
              <IconButton $w={22} aria-label="Fenster"><Icon name="windows" size={12} /></IconButton>
              <IconButton $w={8} aria-label="Fensterliste"><Caret /></IconButton>
            </GroupBody>
            <GroupLabel>Fenster <Caret /></GroupLabel>
          </Group>
          <Group>
            <GroupBody />
            <GroupLabel />
          </Group>
        </Ribbon>

        <Workspace>
          <Sidebar>
            <SideTabs>
              <SideTab $active aria-label="Modellbaum"><Icon name="nodes" size={14} /></SideTab>
              <SideTab aria-label="Ordner-Browser"><Icon name="folders" /></SideTab>
              <SideTab aria-label="Favoriten"><Icon name="favorites" /></SideTab>
            </SideTabs>
            <Panel>
              <PanelHead>
                <PanelTitle>Modellbaum</PanelTitle>
                <IconButton $w={17} aria-label="Einstellungen"><Icon name="tools" size={14} /></IconButton>
                <IconButton $w={12} aria-label="Einstellungen-Liste"><Caret /></IconButton>
                <IconButton $w={20} aria-label="Anzeigen"><Icon name="list" size={14} /></IconButton>
                <IconButton $w={10} aria-label="Anzeigen-Liste"><Caret /></IconButton>
              </PanelHead>
              <Tree>
                <TreeItem $root><Icon name="part" size={12} />PRT0001.PRT</TreeItem>
                {tree.map((item) => (
                  <TreeItem key={item.label} $muted={item.muted} $tall={item.open}>
                    <Expander $open={item.open} />
                    <Icon name={item.icon} size={12} />
                    {item.label}
                  </TreeItem>
                ))}
              </Tree>
            </Panel>
          </Sidebar>
          <Viewport>
            <ViewTools>
              {viewTools.map(([icon, label, on]) => (
                <ViewTool key={icon} $w={20} $on={on} aria-pressed={!!on} aria-label={label}>
                  <Icon name={icon} />
                </ViewTool>
              ))}
            </ViewTools>
            <Impeller />
          </Viewport>
        </Workspace>

        <StatusBar>
          <Row $gap={3}>
            <StatusButton $on aria-label="Modellbaum"><Icon name="nodesBlue" size={12} /></StatusButton>
            <StatusButton aria-label="Browser"><Icon name="browser" /></StatusButton>
            <Divider />
          </Row>
          <Spacer />
          <Row $gap={2}>
            <Divider />
            <Dots>
              <Dot $on />
              <Dot />
              <Dot />
            </Dots>
            <Divider />
            <StatusButton $w={29} aria-label="Suchen"><Icon name="binoculars" size={12} /></StatusButton>
            <Divider />
          </Row>
          <SelectBox>
            <Select aria-label="Auswahlfilter" defaultValue="Smart">
              <option>Smart</option>
            </Select>
            <SelectArrow><Caret /></SelectArrow>
          </SelectBox>
        </StatusBar>
      </Frame>
    </>
  );
}
